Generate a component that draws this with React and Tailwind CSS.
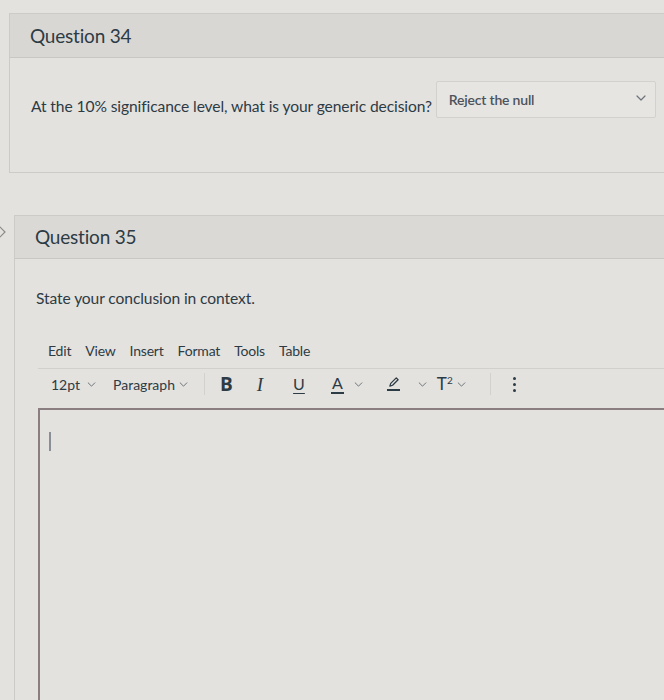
import React from "react";

const Chev = ({ className = "" }) => (
  <svg viewBox="0 0 10 6" className={className} fill="none" stroke="currentColor" strokeWidth="1.2" strokeLinecap="round" strokeLinejoin="round">
    <path d="M1 1l4 4 4-4" />
  </svg>
);

export default function App() {
  return (
    <div className="relative w-[664px] h-[700px] overflow-hidden bg-[#e4e2df] text-[#2d3b45]" style={{ fontFamily: "Lato, 'Open Sans', sans-serif" }}>
      <div className="pt-[13px]">
        {/* Question 34 */}
        <div className="ml-[9px] border border-[#cdcbc8] border-r-0">
          <div className="h-[44px] bg-[#d9d7d4] border-b border-[#c9c7c4] flex items-center pl-[20px]">
            <span className="text-[19px] tracking-[-0.2px] mt-[1px]">Question 34</span>
          </div>
          <div className="h-[114px] flex items-start pl-[21px] pt-[23px]">
            <span className="text-[15.6px] mt-[14px] tracking-[-0.1px]">At the 10% significance level, what is your generic decision?</span>
            <div className="ml-[4px] w-[220px] h-[37px] border border-[#d3d1ce] bg-[#e7e5e2] rounded-[2px] flex items-center justify-between pl-[12px] pr-[9px]">
              <span className="text-[14px] text-[#4c535b] font-semibold tracking-[-0.2px] -mt-[1px]">Reject the null</span>
              <Chev className="w-[10px] h-[6px] text-[#6d737a] -mt-[3px]" />
            </div>
          </div>
        </div>

        {/* Question 35 */}
        <div className="relative mt-[42px]">
          <svg viewBox="0 0 8 14" className="absolute left-[-2px] top-[10px] w-[8px] h-[14px] text-[#8c8a88]" fill="none" stroke="currentColor" strokeWidth="1.2">
            <path d="M1 1l6 6-6 6" />
          </svg>
          <div className="ml-[14px] border border-[#cdcbc8] border-r-0 h-[500px]">
            <div className="h-[43px] bg-[#dbd9d6] border-b border-[#c9c7c4] flex items-center pl-[20px]">
              <span className="text-[19px] tracking-[-0.2px]">Question 35</span>
            </div>
            <div className="pl-[21px] pt-[29px]">
              <div className="text-[15.6px] tracking-[-0.1px] leading-[20px]">State your conclusion in context.</div>
            </div>
            <div className="ml-[23px] mt-[31px]">
              <div className="flex items-center gap-[14px] text-[14px] pl-[10px] h-[22px] tracking-[-0.2px]">
                <span>Edit</span>
                <span>View</span>
                <span>Insert</span>
                <span>Format</span>
                <span>Tools</span>
                <span>Table</span>
              </div>
              <div className="mt-[7px] border-t border-[#d2d0cd]" />
              <div className="h-[30px] flex items-center text-[14px] pl-[13px]">
                <span>12pt</span>
                <Chev className="w-[9px] h-[5px] ml-[7px] text-[#6d737a]" />
                <span className="ml-[17px]">Paragraph</span>
                <Chev className="w-[9px] h-[5px] ml-[4px] text-[#6d737a]" />
                <div className="ml-[16px] w-px h-[22px] bg-[#d3d1ce]" />
                <span className="ml-[15px] text-[19px] font-bold leading-none" style={{ fontFamily: "'Open Sans', sans-serif" }}>B</span>
                <span className="ml-[24px] text-[19px] italic leading-none" style={{ fontFamily: "'Liberation Serif', serif" }}>I</span>
                <span className="ml-[30px] text-[16px] underline underline-offset-[3px]">U</span>
                <span className="ml-[26px] flex flex-col items-center">
                  <span className="text-[16px] leading-[16px]">A</span>
                  <span className="w-[13px] h-[2px] bg-[#2d3b45] mt-[1px]" />
                </span>
                <Chev className="w-[9px] h-[5px] ml-[10px] text-[#6d737a]" />
                <span className="ml-[24px] flex flex-col items-center">
                  <svg viewBox="0 0 14 12" className="w-[13px] h-[11px]" fill="none" stroke="#2d3b45" strokeWidth="1.4" strokeLinejoin="round">
                    <path d="M3 10l1-3 6-6 2 2-6 6z" />
                  </svg>
                  <span className="w-[13px] h-[2px] bg-[#2d3b45] mt-[1px]" />
                </span>
                <Chev className="w-[9px] h-[5px] ml-[18px] text-[#6d737a]" />
                <span className="ml-[10px] text-[17px]">T<sup className="text-[10px] -top-[6px]">2</sup></span>
                <Chev className="w-[9px] h-[5px] ml-[4px] text-[#6d737a]" />
                <div className="ml-[24px] w-px h-[22px] bg-[#d3d1ce]" />
                <span className="ml-[22px] flex flex-col gap-[3px]">
                  <span className="w-[3px] h-[3px] rounded-full bg-[#2d3b45]" />
                  <span className="w-[3px] h-[3px] rounded-full bg-[#2d3b45]" />
                  <span className="w-[3px] h-[3px] rounded-full bg-[#2d3b45]" />
                </span>
              </div>
              <div className="mt-[9px] border-t-[2px] border-l-[2px] border-[#8a7e80] h-[300px] pl-[9px] pt-[22px]">
                <div className="w-[1.5px] h-[19px] bg-[#8a8e96]" />
              </div>
            </div>
          </div>
        </div>
      </div>
    </div>
  );
}
